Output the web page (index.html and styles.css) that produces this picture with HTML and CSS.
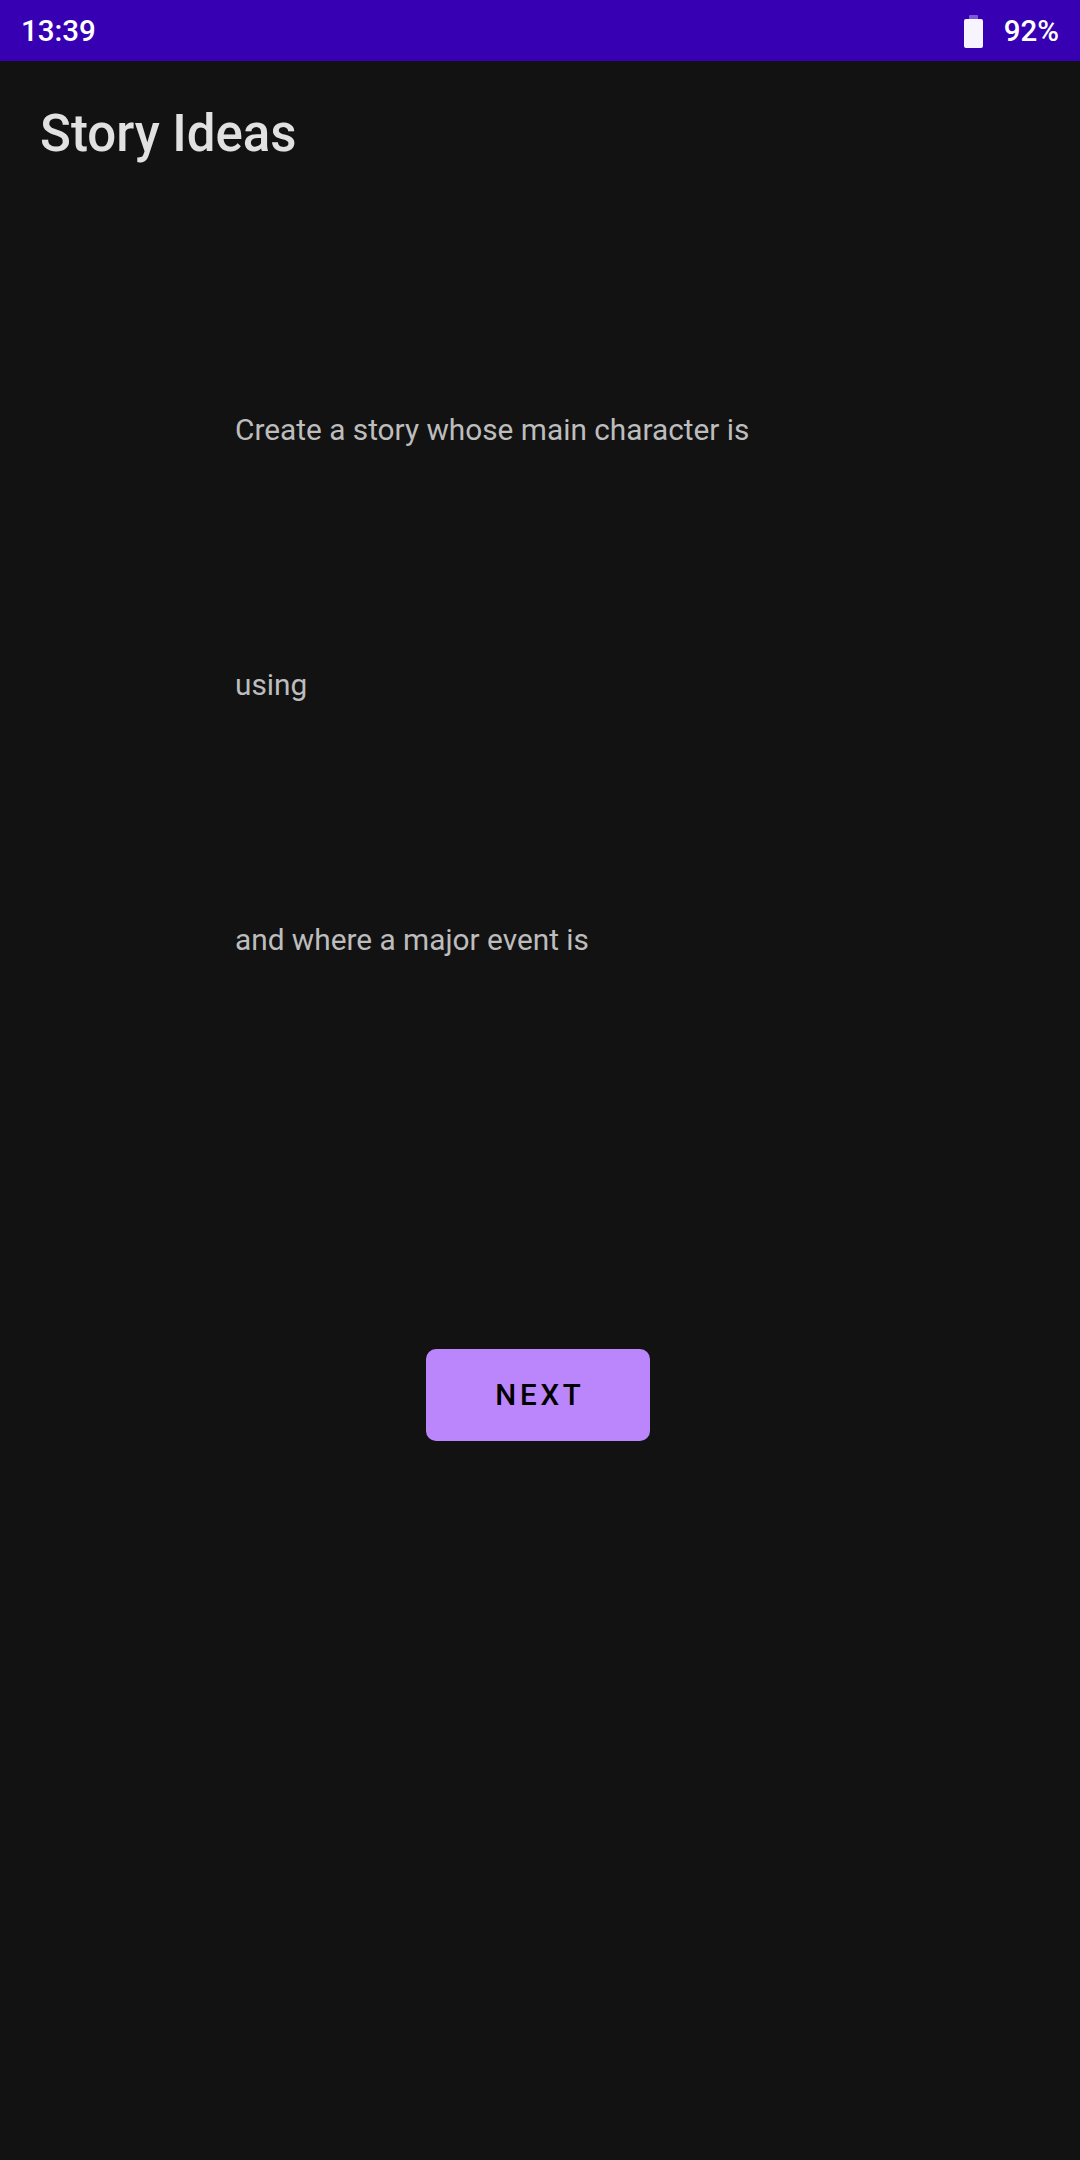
FILE: index.html
```html
<!DOCTYPE html>
<html lang="en">
<head>
<meta charset="utf-8">
<title>Story Ideas</title>
<link rel="stylesheet" href="styles.css">
</head>
<body>
<div class="status-bar">
  <span class="clock">13:39</span>
  <div class="status-right">
    <svg class="battery" width="19" height="33" viewBox="0 0 19 33">
      <rect x="5" y="0" width="9" height="5" rx="1" fill="#7a5ad8"/>
      <rect x="0" y="4" width="19" height="29" rx="2" fill="#f8f4ff"/>
    </svg>
    <span class="pct">92%</span>
  </div>
</div>
<main class="screen">
  <h1 class="title">Story Ideas</h1>
  <div class="prompts">
    <p class="prompt">Create a story whose main character is</p>
    <p class="prompt">using</p>
    <p class="prompt">and where a major event is</p>
  </div>
  <button class="next-btn">NEXT</button>
</main>
</body>
</html>
```
FILE: styles.css
```css
html, body {
  margin: 0;
  padding: 0;
  background: #121212;
  width: 1080px;
  height: 2160px;
  font-family: Roboto, "Noto Sans", sans-serif;
}

.status-bar {
  height: 61px;
  background: #3700B3;
  display: flex;
  align-items: center;
  justify-content: space-between;
  padding: 0 21px 0 21px;
  color: #ffffff;
  font-size: 29.5px;
  font-weight: 500;
}

.clock {
  line-height: 35px;
  margin-top: 1px;
}

.status-right {
  display: flex;
  align-items: center;
  gap: 21px;
}

.battery {
  display: block;
  margin-top: 1px;
}

.pct {
  line-height: 35px;
  margin-top: 1px;
}

.screen {
  display: flex;
  flex-direction: column;
}

.title {
  margin: 42px 0 0 40px;
  font-size: 51px;
  font-weight: 500;
  line-height: 62px;
  color: #e1e1e1;
}

.prompts {
  display: flex;
  flex-direction: column;
  gap: 220px;
  margin: 247px 0 0 235px;
}

.prompt {
  margin: 0;
  font-size: 29.8px;
  line-height: 35px;
  color: #bdbdbd;
}

.next-btn {
  align-self: center;
  margin-top: 392px;
  margin-right: 4px;
  width: 224px;
  height: 92px;
  border: none;
  border-radius: 10px;
  background: #BB86FC;
  color: #000000;
  font-family: Roboto, "Noto Sans", sans-serif;
  font-size: 29.5px;
  font-weight: 500;
  letter-spacing: 3.8px;
  text-indent: 3.8px;
  padding: 0;
}
```
